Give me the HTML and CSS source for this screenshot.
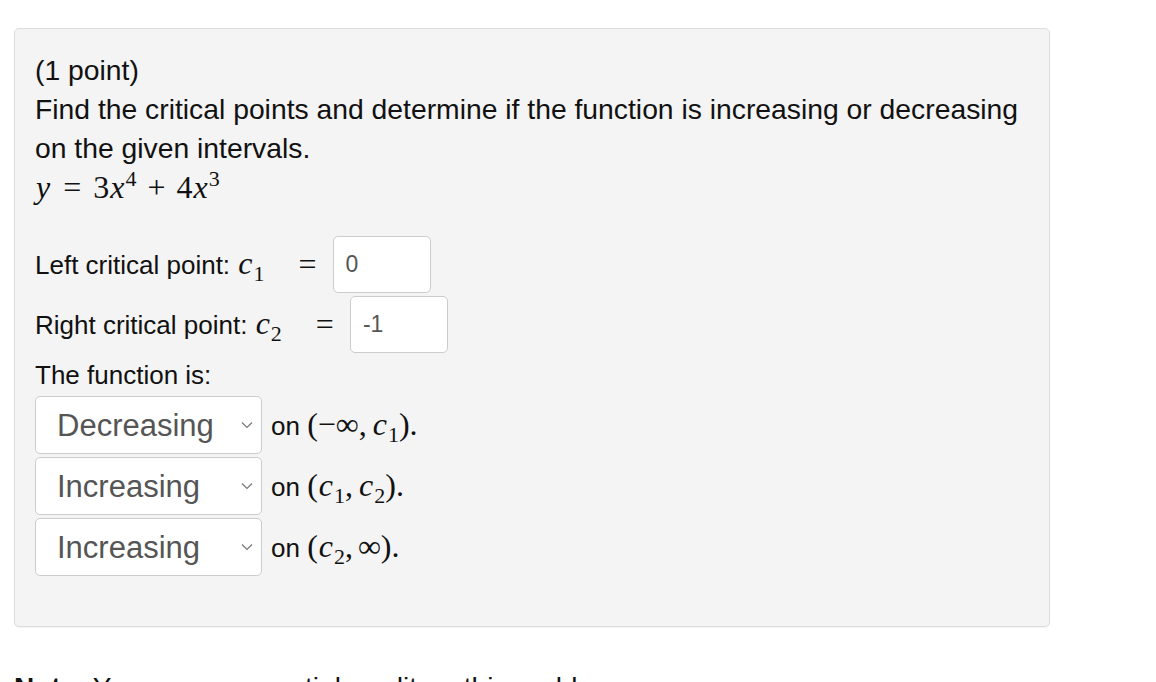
FILE: index.html
```html
<!DOCTYPE html>
<html lang="en">
<head>
    <meta charset="UTF-8">
    <meta name="viewport" content="width=device-width, initial-scale=1.0">
    <title>Problem</title>
    <link rel="stylesheet" href="styles.css">
</head>
<body>
    <div class="problem">
        <div class="intro">
            (1 point)<br>
            Find the critical points and determine if the function is increasing or decreasing on the given intervals.<br>
            <span class="math"><i>y</i><span class="rel">=</span>3<i>x</i><sup>4</sup><span class="bin">+</span>4<i>x</i><sup>3</sup></span>
        </div>

        <div class="row first">
            <span>Left critical point: <span class="math"><i>c</i><sub>1</sub></span></span>
            <span class="math eq">=</span>
            <input type="text" class="answer" value="0">
        </div>
        <div class="row">
            <span>Right critical point: <span class="math"><i>c</i><sub>2</sub></span></span>
            <span class="math eq">=</span>
            <input type="text" class="answer" value="-1">
        </div>
        <div class="label">The function is:</div>

        <div class="row pick">
            <div class="select-wrap">
                <select><option>Decreasing</option><option>Increasing</option></select>
                <svg class="chevron" width="12" height="8" viewBox="0 0 12 8"><path d="M1 1.5 L6 6.5 L11 1.5" fill="none" stroke="#777" stroke-width="1.2"/></svg>
            </div>
            <span>on <span class="math">(&minus;&infin;,<span class="thin"></span><i>c</i><sub>1</sub>).</span></span>
        </div>
        <div class="row pick">
            <div class="select-wrap">
                <select><option>Increasing</option><option>Decreasing</option></select>
                <svg class="chevron" width="12" height="8" viewBox="0 0 12 8"><path d="M1 1.5 L6 6.5 L11 1.5" fill="none" stroke="#777" stroke-width="1.2"/></svg>
            </div>
            <span>on <span class="math">(<i>c</i><sub>1</sub>,<span class="thin"></span><i>c</i><sub>2</sub>).</span></span>
        </div>
        <div class="row pick">
            <div class="select-wrap">
                <select><option>Increasing</option><option>Decreasing</option></select>
                <svg class="chevron" width="12" height="8" viewBox="0 0 12 8"><path d="M1 1.5 L6 6.5 L11 1.5" fill="none" stroke="#777" stroke-width="1.2"/></svg>
            </div>
            <span>on <span class="math">(<i>c</i><sub>2</sub>,<span class="thin"></span>&infin;).</span></span>
        </div>
    </div>
    <p class="note"><b>Note:</b> You can earn partial credit on this problem.</p>
</body>
</html>
```

FILE: styles.css
```css
body {
    margin: 0;
    padding: 28px 0 0 14px;
    font-family: "Liberation Sans", Arial, sans-serif;
    font-size: 26px;
    line-height: 39px;
    color: #111;
    background-color: #fff;
}
.problem {
    width: 994px;
    padding: 22px 20px 50px 20px;
    background-color: #f4f4f4;
    border: 1px solid #ddd;
    border-radius: 5px;
    box-shadow: 0 1px 1px rgba(0, 0, 0, 0.05);
}
.intro {
    font-size: 28.3px;
}
.math {
    font-family: "Liberation Serif", "Times New Roman", serif;
    font-size: 32px;
}
.math i {
    margin: 0 1px;
}
.math sup, .math sub {
    font-size: 22px;
    line-height: 0;
}
.rel {
    margin: 0 12px;
}
.bin {
    margin: 0 11px;
}
.thin {
    display: inline-block;
    width: 5px;
}
.row {
    display: flex;
    align-items: center;
    height: 57px;
    margin-top: 3px;
}
.row.first {
    margin-top: 28px;
}
.eq {
    margin: 0 16px 0 34px;
}
.answer {
    width: 98px;
    height: 57px;
    box-sizing: border-box;
    padding: 0 12px;
    font-family: "Liberation Sans", Arial, sans-serif;
    font-size: 23px;
    color: #555;
    background-color: #fff;
    border: 1px solid #ccc;
    border-radius: 5px;
}
.label {
    margin-top: 3px;
}
.pick {
    height: 58px;
    margin-top: 1px;
}
.row.pick + .row.pick {
    margin-top: 3px;
}
.select-wrap {
    position: relative;
    margin-right: 9px;
}
select {
    appearance: none;
    -webkit-appearance: none;
    display: block;
    width: 227px;
    height: 58px;
    padding: 0 0 0 21px;
    font-family: "Liberation Sans", Arial, sans-serif;
    font-size: 31px;
    color: #555;
    background-color: #fff;
    border: 1px solid #ccc;
    border-radius: 5px;
}
.chevron {
    position: absolute;
    right: 9px;
    top: 25px;
}
.note {
    margin: 41px 0 0 0;
    font-size: 28px;
}
```
